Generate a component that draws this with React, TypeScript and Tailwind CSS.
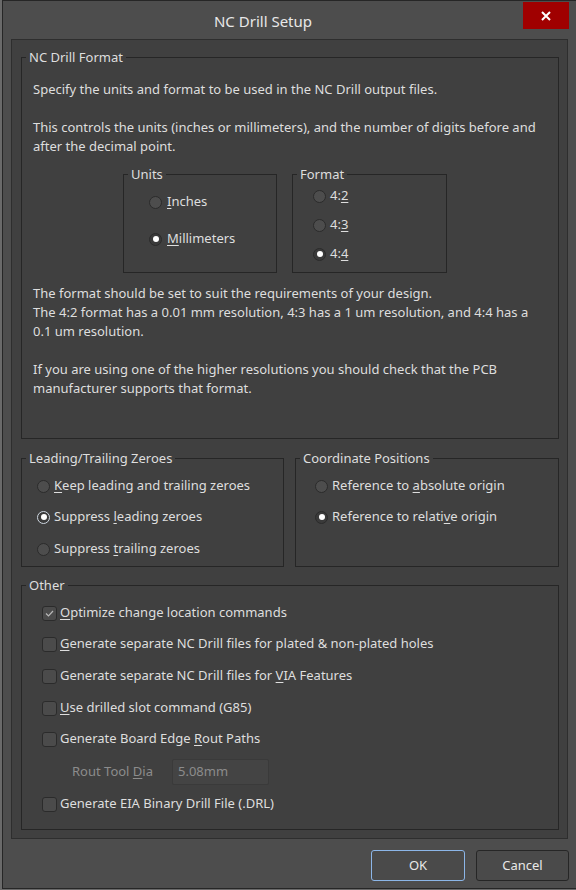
import React from "react";

const F = { fontFamily: '"Noto Sans", "Open Sans", sans-serif' };

function U({ c }: { c: string }) {
  return <span className="underline underline-offset-[2px] decoration-1">{c}</span>;
}

function Radio({ checked, focus }: { checked?: boolean; focus?: boolean }) {
  return (
    <span
      className={`flex items-center justify-center w-[13px] h-[13px] rounded-full border ${
        focus ? "border-[#cfd8e2]" : "border-[#2b2b2b]"
      } ${checked ? "bg-[#3a3a3a]" : "bg-[#4d4d4d]"} shrink-0`}
    >
      {checked && <span className="block w-[6px] h-[6px] rounded-full bg-white" />}
    </span>
  );
}

function Check({ checked }: { checked?: boolean }) {
  return (
    <span className="flex items-center justify-center w-[15px] h-[15px] rounded-[3px] border border-[#2b2b2b] bg-[#4b4b4b] shrink-0">
      {checked && (
        <svg width="11" height="11" viewBox="0 0 11 11">
          <path d="M2 5.5 L4.5 8 L9 3" fill="none" stroke="#b8b8b8" strokeWidth="1.2" />
        </svg>
      )}
    </span>
  );
}

function Legend({ children }: { children: React.ReactNode }) {
  return (
    <legend className="ml-[4px] px-[3px] text-[13px] leading-[18px] text-[#dedede]">{children}</legend>
  );
}

export default function App() {
  return (
    <div className="w-[576px] h-[890px] bg-[#6a6a6a] text-[#dedede]" style={F}>
      <div className="ml-[2px] w-[574px] h-[889px] border-l border-t border-b border-[#262626] bg-[#4d4d4d] flex flex-col">
        {/* title bar */}
        <div className="h-[38px] shrink-0 flex items-start pr-[7px]">
          <div className="flex-1 h-[38px] flex items-center justify-center">
            <span className="text-[15px] text-[#e8e8e8] mt-[2px]">NC Drill Setup</span>
          </div>
          <div className="mt-[1px] w-[46px] h-[27px] bg-[#a00000] flex items-center justify-center">
            <svg width="10" height="10" viewBox="0 0 10 10">
              <path d="M1 1 L9 9 M9 1 L1 9" stroke="white" strokeWidth="2" />
            </svg>
          </div>
        </div>

        {/* main panel */}
        <div className="ml-[8px] w-[557px] h-[800px] shrink-0 border border-[#2e2e2e] bg-[#404040] pl-[9px] pr-[8px] pt-[8px] text-[13px]">
          {/* NC Drill Format */}
          <fieldset className="w-[538px] h-[391px] border border-[#262626]">
            <Legend>NC Drill Format</Legend>
            <div className="pl-[11px] pt-[14px] leading-[19px] whitespace-nowrap">
              <div>Specify the units and format to be used in the NC Drill output files.</div>
              <div>&nbsp;</div>
              <div>This controls the units (inches or millimeters), and the number of digits before and</div>
              <div>after the decimal point.</div>
            </div>
            <div className="mt-[9px] flex gap-[15px] ml-[101px]">
              <fieldset className="w-[154px] h-[108px] border border-[#262626]">
                <Legend>Units</Legend>
                <div className="pl-[25px] pt-[9px] flex flex-col">
                  <div className="h-[20px] flex items-center gap-[5px]">
                    <Radio />
                    <span><U c="I" />nches</span>
                  </div>
                  <div className="h-[20px] mt-[17px] flex items-center gap-[5px]">
                    <Radio checked />
                    <span><U c="M" />illimeters</span>
                  </div>
                </div>
              </fieldset>
              <fieldset className="w-[155px] h-[108px] border border-[#262626]">
                <Legend>Format</Legend>
                <div className="pl-[20px] pt-[3px] flex flex-col gap-[9px]">
                  <div className="h-[20px] flex items-center gap-[4px]">
                    <Radio />
                    <span>4:<U c="2" /></span>
                  </div>
                  <div className="h-[20px] flex items-center gap-[4px]">
                    <Radio />
                    <span>4:<U c="3" /></span>
                  </div>
                  <div className="h-[20px] flex items-center gap-[4px]">
                    <Radio checked />
                    <span>4:<U c="4" /></span>
                  </div>
                </div>
              </fieldset>
            </div>
            <div className="pl-[11px] mt-[11px] leading-[19px] whitespace-nowrap">
              <div>The format should be set to suit the requirements of your design.</div>
              <div>The 4:2 format has a 0.01 mm resolution, 4:3 has a 1 um resolution, and 4:4 has a</div>
              <div>0.1 um resolution.</div>
              <div>&nbsp;</div>
              <div>If you are using one of the higher resolutions you should check that the PCB</div>
              <div>manufacturer supports that format.</div>
            </div>
          </fieldset>

          {/* zeroes + coordinates */}
          <div className="mt-[10px] flex gap-[11px]">
            <fieldset className="w-[263px] h-[118px] border border-[#262626]">
              <Legend>Leading/Trailing Zeroes</Legend>
              <div className="pl-[15px] pt-[9px] flex flex-col">
                <div className="h-[20px] flex items-center gap-[4px]">
                  <Radio />
                  <span><U c="K" />eep leading and trailing zeroes</span>
                </div>
                <div className="h-[20px] mt-[11px] flex items-center gap-[4px]">
                  <Radio checked focus />
                  <span>Suppress <U c="l" />eading zeroes</span>
                </div>
                <div className="h-[20px] mt-[12px] flex items-center gap-[4px]">
                  <Radio />
                  <span>Suppress <U c="t" />railing zeroes</span>
                </div>
              </div>
            </fieldset>
            <fieldset className="w-[264px] h-[118px] border border-[#262626]">
              <Legend>Coordinate Positions</Legend>
              <div className="pl-[19px] pt-[9px] flex flex-col">
                <div className="h-[20px] flex items-center gap-[4px]">
                  <Radio />
                  <span>Reference to <U c="a" />bsolute origin</span>
                </div>
                <div className="h-[20px] mt-[11px] flex items-center gap-[4px]">
                  <Radio checked />
                  <span>Reference to relati<U c="v" />e origin</span>
                </div>
              </div>
            </fieldset>
          </div>

          {/* Other */}
          <fieldset className="mt-[9px] w-[538px] h-[254px] border border-[#262626]">
            <Legend>Other</Legend>
            <div className="pl-[20px] pt-[9px] flex flex-col whitespace-nowrap">
              <div className="h-[20px] flex items-center gap-[3px]">
                <Check checked />
                <span><U c="O" />ptimize change location commands</span>
              </div>
              <div className="h-[20px] mt-[11px] flex items-center gap-[3px]">
                <Check />
                <span><U c="G" />enerate separate NC Drill files for plated &amp; non-plated holes</span>
              </div>
              <div className="h-[20px] mt-[12px] flex items-center gap-[3px]">
                <Check />
                <span>Generate separate NC Drill files for <U c="V" />IA Features</span>
              </div>
              <div className="h-[20px] mt-[12px] flex items-center gap-[3px]">
                <Check />
                <span><U c="U" />se drilled slot command (G85)</span>
              </div>
              <div className="h-[20px] mt-[11px] flex items-center gap-[3px]">
                <Check />
                <span>Generate Board Edge <U c="R" />out Paths</span>
              </div>
              <div className="h-[26px] mt-[10px] flex items-center">
                <span className="ml-[30px] w-[100px] text-[#8c8c8c]">Rout Tool <U c="D" />ia</span>
                <div className="w-[97px] h-[26px] border border-[#3a3a3a] bg-[#444444] rounded-[2px] flex items-center pl-[5px] text-[#8c8c8c]">
                  5.08mm
                </div>
              </div>
              <div className="h-[20px] mt-[9px] flex items-center gap-[3px]">
                <Check />
                <span>Generate EIA Binary Drill File (.DRL)</span>
              </div>
            </div>
          </fieldset>
        </div>

        {/* buttons */}
        <div className="mt-[11px] flex justify-end gap-[11px] pr-[7px] text-[13px]">
          <button className="w-[94px] h-[31px] rounded-[3px] border border-[#8cb6e8] bg-[#4a4a4a] text-[#e8e8e8]">OK</button>
          <button className="w-[93px] h-[31px] rounded-[3px] border border-[#262626] bg-[#4a4a4a] text-[#e8e8e8]">Cancel</button>
        </div>
      </div>
    </div>
  );
}
